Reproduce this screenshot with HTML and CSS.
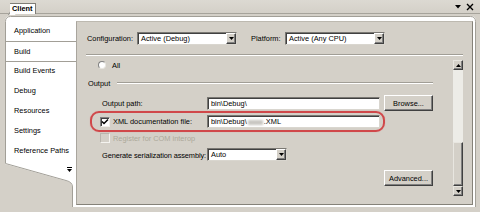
FILE: index.html
```html
<!DOCTYPE html>
<html>
<head>
<meta charset="utf-8">
<link rel="stylesheet" href="styles.css">
</head>
<body>
<div class="app">
  <div class="tabstrip">
    <div class="doctab">Client</div>
    <div class="winbtns">
      <svg class="ico-menu" width="6" height="4" viewBox="0 0 6 4"><polygon points="0,0 6,0 3,3.5" fill="#000"/></svg>
      <svg class="ico-close" width="8" height="8" viewBox="0 0 8 8"><path d="M1 1 L7 7 M7 1 L1 7" stroke="#000" stroke-width="1.4"/></svg>
    </div>
  </div>
  <div class="frame">
    <nav class="nav">
      <div class="nav-item">Application</div>
      <div class="nav-item active">Build</div>
      <div class="nav-item">Build Events</div>
      <div class="nav-item">Debug</div>
      <div class="nav-item">Resources</div>
      <div class="nav-item">Settings</div>
      <div class="nav-item">Reference Paths</div>
      <div class="nav-more">
        <svg width="5" height="5" viewBox="0 0 5 5"><rect x="0" y="0" width="5" height="1" fill="#000"/><polygon points="0,2 5,2 2.5,5" fill="#000"/></svg>
      </div>
    </nav>
    <section class="panel">
      <div class="config-row">
        <span class="lbl lbl-config">Configuration:</span>
        <div class="combo combo-wide"><span class="combo-text">Active (Debug)</span><span class="combo-btn"><svg width="5" height="3" viewBox="0 0 5 3"><polygon points="0,0 5,0 2.5,3" fill="#000"/></svg></span></div>
        <span class="lbl lbl-platform">Platform:</span>
        <div class="combo combo-wide"><span class="combo-text">Active (Any CPU)</span><span class="combo-btn"><svg width="5" height="3" viewBox="0 0 5 3"><polygon points="0,0 5,0 2.5,3" fill="#000"/></svg></span></div>
      </div>
      <div class="sep"></div>
      <div class="scroll-area">
        <div class="scroll-content">
          <div class="radio-row"><span class="radio"></span><span>All</span></div>
          <div class="group-head"><span>Output</span><span class="group-line"></span></div>
          <div class="field-row">
            <span class="field-lbl">Output path:</span>
            <div class="textbox">bin\Debug\</div>
            <div class="btn">Browse...</div>
          </div>
          <div class="highlight">
            <div class="check-lbl"><span class="check checked"><svg width="8" height="8" viewBox="0 0 8 8"><path d="M1 3.5 L3 5.5 L7 1.5" fill="none" stroke="#000" stroke-width="1.5"/></svg></span><span>XML documentation file:</span></div>
            <div class="textbox">bin\Debug\<span class="blur"></span>.XML</div>
          </div>
          <div class="check-row disabled"><span class="check"></span><span>Register for COM interop</span></div>
          <div class="field-row gen-row">
            <span class="field-lbl">Generate serialization assembly:</span>
            <div class="combo combo-auto"><span class="combo-text">Auto</span><span class="combo-btn"><svg width="5" height="3" viewBox="0 0 5 3"><polygon points="0,0 5,0 2.5,3" fill="#000"/></svg></span></div>
          </div>
          <div class="adv-row"><div class="btn">Advanced...</div></div>
        </div>
        <div class="vscroll">
          <div class="sb-btn"><svg width="5" height="3" viewBox="0 0 5 3"><polygon points="0,3 5,3 2.5,0" fill="#000"/></svg></div>
          <div class="sb-track"></div>
          <div class="sb-thumb"></div>
          <div class="sb-btn"><svg width="5" height="3" viewBox="0 0 5 3"><polygon points="0,0 5,0 2.5,3" fill="#000"/></svg></div>
        </div>
      </div>
    </section>
  </div>
</div>
</body>
</html>
```
FILE: styles.css
```css
* { box-sizing: border-box; }
html, body { margin: 0; padding: 0; }
body {
  background: #d4d0c8;
  font-family: "Liberation Sans", Arial, sans-serif;
  font-size: 7.4px;
  color: #000;
  width: 480px;
  height: 212px;
  overflow: hidden;
}
.app { width: 480px; height: 212px; }

/* top document tab strip */
.tabstrip {
  height: 14px;
  display: flex;
  align-items: flex-end;
  border-bottom: 1px solid #a6a39b;
  background: linear-gradient(#dcd9d2, #d4d0c8);
  position: relative;
  z-index: 0;
}
.doctab {
  position: relative;
  margin-left: 10px;
  height: 11px;
  padding: 0 2px 0 2px;
  background: #fff;
  border: 1px solid #7f7d77;
  border-left: none;
  border-bottom: none;
  font-weight: bold;
  line-height: 10px;
  margin-bottom: -1px;
}
.doctab::before {
  content: "";
  position: absolute;
  left: -2px;
  top: -1px;
  width: 6px;
  height: 11px;
  background: #fff;
  border-left: 1px solid #7f7d77;
  border-top: 1px solid #7f7d77;
  transform: skewX(-30deg);
  transform-origin: bottom left;
  z-index: -1;
}
.winbtns {
  margin-left: auto;
  margin-right: 6px;
  align-self: center;
  display: flex;
  align-items: center;
  gap: 5px;
}
.ico-menu { margin-top: 1px; }

/* frame */
.frame {
  margin: 2px 4px 0 5px;
  width: 471px;
  height: 191px;
  display: flex;
  background: url("data:image/svg+xml,%3Csvg xmlns='http://www.w3.org/2000/svg' width='471' height='191'%3E%3Cpath d='M0 148 L0 5 Q0 0 5 0 L466 0 Q471 0 471 5 L471 191 L67 191 L67 171 Q67 166 61 165 Z' fill='white'/%3E%3Cpath d='M67.5 191 L67.5 171 Q67.5 166 61 164.5 L0.5 147.5 L0.5 5.5 Q0.5 0.5 5.5 0.5 L465.5 0.5 Q470.5 0.5 470.5 5.5 L470.5 191' fill='none' stroke='%23a29f97'/%3E%3C/svg%3E") no-repeat;
}
.nav {
  width: 71px;
  padding-top: 5px;
  display: flex;
  flex-direction: column;
}
.nav-item {
  height: 20px;
  line-height: 20px;
  padding-left: 9px;
  white-space: nowrap;
}
.nav-item.active {
  height: 21px;
  line-height: 19px;
  margin-bottom: -1px;
  margin-left: 1px;
  padding-left: 8px;
  border-top: 1px solid #a29f97;
  border-bottom: 1px solid #a29f97;
}
.nav-more {
  display: flex;
  justify-content: flex-end;
  padding-right: 4px;
  margin-top: 6px;
}

.panel {
  width: 397px;
  height: 184px;
  margin-top: 5px;
  background: #d4d0c8;
  border: 1px solid;
  border-color: #bdb9b0 #858279 #858279 #a9a59d;
}

.config-row {
  display: flex;
  align-items: center;
  height: 13px;
  margin-top: 10px;
  padding-left: 10px;
}
.lbl-config { width: 50px; }
.lbl-platform { width: 34px; margin-left: 14px; }

.combo {
  height: 13px;
  background: #fff;
  border: 1px solid;
  border-color: #7a7873 #d9d6cf #d9d6cf #7a7873;
  box-shadow: inset 1px 1px #404040;
  display: flex;
  align-items: center;
  padding-left: 3px;
}
.combo-wide { width: 100px; }
.combo-auto { width: 80px; }
.combo-text { flex: 1; white-space: nowrap; }
.combo-btn {
  width: 10px;
  height: 11px;
  background: #d4d0c8;
  border: 1px solid;
  border-color: #fff #404040 #404040 #fff;
  box-shadow: inset -1px -1px #808080;
  display: flex;
  align-items: center;
  justify-content: center;
}

.sep {
  margin: 9px 9px 0 9px;
  height: 2px;
  border-top: 1px solid #a19e96;
  border-bottom: 1px solid #fff;
}

.scroll-area {
  display: flex;
  margin: 3px 9px 0 9px;
  height: 137px;
}
.scroll-content {
  flex: 1;
  display: flex;
  flex-direction: column;
}
.radio-row {
  height: 12px;
  display: flex;
  align-items: center;
  padding-left: 12px;
  gap: 6px;
}
.radio {
  width: 8px;
  height: 8px;
  border-radius: 50%;
  background: #fff;
  border: 1px solid;
  border-color: #808080 #e8e6e0 #e8e6e0 #808080;
}
.group-head {
  height: 12px;
  margin-top: 6px;
  display: flex;
  align-items: center;
  padding-left: 2px;
  padding-right: 20px;
}
.group-line {
  flex: 1;
  margin-left: 7px;
  height: 2px;
  border-top: 1px solid #a19e96;
  border-bottom: 1px solid #fff;
}
.field-row {
  height: 16px;
  margin-top: 6px;
  display: flex;
  align-items: center;
  padding-left: 16px;
}
.field-lbl { width: 105px; white-space: nowrap; }
.textbox {
  width: 173px;
  height: 13px;
  background: #fff;
  border: 1px solid;
  border-color: #7a7873 #d9d6cf #d9d6cf #7a7873;
  box-shadow: inset 1px 1px #404040;
  padding-left: 3px;
  line-height: 11px;
  white-space: nowrap;
}
.blur {
  display: inline-block;
  width: 15px;
  height: 5px;
  margin: 0 1px;
  background: #c9c7c2;
  filter: blur(1.2px);
  vertical-align: middle;
}
.btn {
  width: 49px;
  height: 16px;
  margin-left: 4px;
  background: #d4d0c8;
  border: 1px solid;
  border-color: #fff #404040 #404040 #fff;
  box-shadow: inset -1px -1px #808080;
  display: flex;
  align-items: center;
  justify-content: center;
  white-space: nowrap;
}
.highlight {
  margin-left: 4px;
  width: 295px;
  height: 21px;
  border: 2px solid #d0484a;
  border-radius: 9px;
  display: flex;
  align-items: center;
  padding-left: 8px;
  box-shadow: 0 0 1px #e08a8a;
}
.check-lbl {
  width: 107px;
  display: flex;
  align-items: center;
  gap: 3px;
  white-space: nowrap;
}
.check {
  width: 10px;
  height: 10px;
  background: #fff;
  border: 1px solid;
  border-color: #808080 #f0eee9 #f0eee9 #808080;
  box-shadow: inset 1px 1px #404040;
  display: flex;
  align-items: center;
  justify-content: center;
  flex: none;
}
.check-row {
  height: 12px;
  display: flex;
  align-items: center;
  padding-left: 14px;
  gap: 3px;
}
.check-row.disabled { color: #aca899; }
.check-row.disabled .check {
  background: #d4d0c8;
  border-color: #b8b5ad #f4f3ef #f4f3ef #b8b5ad;
  box-shadow: none;
}
.gen-row { height: 14px; margin-top: 3px; }
.gen-row .field-lbl { padding-top: 3px; letter-spacing: -0.1px; }
.adv-row {
  margin-top: 9px;
  height: 16px;
  display: flex;
  justify-content: flex-end;
  padding-right: 20px;
}

.vscroll {
  width: 10px;
  display: flex;
  flex-direction: column;
  padding-top: 1px;
}
.sb-btn {
  width: 10px;
  height: 10px;
  background: #d4d0c8;
  border: 1px solid;
  border-color: #e8e6e0 #404040 #404040 #e8e6e0;
  box-shadow: inset -1px -1px #808080;
  display: flex;
  align-items: center;
  justify-content: center;
}
.sb-track {
  height: 72px;
  background: #edece7;
}
.sb-thumb {
  height: 44px;
  background: #d4d0c8;
  border: 1px solid;
  border-color: #e8e6e0 #404040 #404040 #e8e6e0;
  box-shadow: inset -1px -1px #808080;
}
```
